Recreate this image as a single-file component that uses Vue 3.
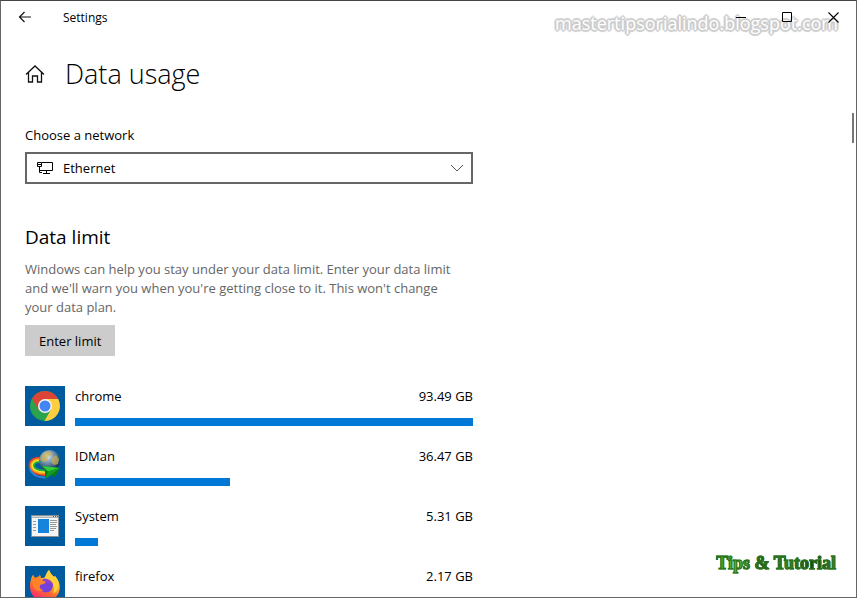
<template>
  <div class="window">
    <header class="titlebar">
      <button class="back" type="button" aria-label="Back">
        <svg width="14" height="12" viewBox="0 0 14 12" fill="none" stroke="#111" stroke-width="1.2">
          <path d="M13 6H1.5M6.5 1 1.5 6l5 5"/>
        </svg>
      </button>
      <span class="app-name">Settings</span>
      <div class="controls">
        <button type="button" aria-label="Minimize">
          <svg width="11" height="11" viewBox="0 0 11 11" stroke="#000"><path d="M0 5.5h10"/></svg>
        </button>
        <button type="button" aria-label="Maximize">
          <svg width="11" height="11" viewBox="0 0 11 11" fill="none" stroke="#000"><path d="M.5.5h9v9h-9z"/></svg>
        </button>
        <button type="button" aria-label="Close">
          <svg width="11" height="11" viewBox="0 0 11 11" stroke="#000" stroke-width="1.1"><path d="M.5.5l10 10M10.5.5l-10 10"/></svg>
        </button>
      </div>
    </header>
    <span class="watermark">mastertipsorialindo.blogspot.com</span>

    <div class="heading">
      <a class="home" href="#" aria-label="Home">
        <svg width="20" height="20" viewBox="0 0 20 20" fill="none" stroke="#111" stroke-width="1.3">
          <path d="M1 10.500 10 2l9 8.500M3.500 8.500v9.500h4v-6h5v6h4V8.500"/>
        </svg>
      </a>
      <h1>Data usage</h1>
    </div>

    <main class="content">
      <label class="field-label" for="network">Choose a network</label>
      <div class="select-box">
        <svg class="net-icon" width="17" height="14" viewBox="0 0 17 14" fill="none" stroke="#000">
          <path d="M5 1.500h10.500v8H2.500M9.500 10v2.500M6 12.500h7"/>
          <path d="M.5 1.500h4v4h-4zM2.500 5.500v6H5M1 3.500h3"/>
        </svg>
        <select id="network" v-model="network">
          <option>Ethernet</option>
          <option>Wi-Fi</option>
        </select>
        <svg class="chevron" width="14" height="8" viewBox="0 0 14 8" fill="none" stroke="#555">
          <path d="M1 1l6 6 6-6"/>
        </svg>
      </div>

      <h2>Data limit</h2>
      <p class="hint">
        Windows can help you stay under your data limit. Enter your data limit
        and we'll warn you when you're getting close to it. This won't change
        your data plan.
      </p>
      <button class="enter-limit" type="button">Enter limit</button>

      <ul class="usage">
        <li v-for="app in apps" :key="app.name" class="usage-row">
          <div class="tile">
            <svg v-if="app.name === 'chrome'" width="40" height="40" viewBox="0 0 40 40">
              <circle cx="20" cy="20" r="15" fill="#2ba24c"/>
              <path d="M7 12.500A15 15 0 0 1 33 12.500V13H20l-6.200 11z" fill="#db4437"/>
              <path d="M20 13h13.200A15 15 0 0 1 19.500 35L26 23.500z" fill="#ffcd40"/>
              <circle cx="20" cy="20" r="7" fill="#f4f4f4"/>
              <circle cx="20" cy="20" r="5.500" fill="#4285f4"/>
            </svg>
            <svg v-else-if="app.name === 'IDMan'" width="40" height="40" viewBox="0 0 40 40">
              <defs>
                <radialGradient id="globe" cx=".4" cy=".3" r=".75">
                  <stop offset="0" stop-color="#f2f6f5"/>
                  <stop offset=".3" stop-color="#8fa9c4"/>
                  <stop offset=".7" stop-color="#3d6080"/>
                  <stop offset="1" stop-color="#0c1d30"/>
                </radialGradient>
              </defs>
              <g fill="none" stroke-width="1.8">
                <path d="M17 12C10 10.500 4.500 14 4.500 19.500c0 6 7 9.500 16 9.500" stroke="#e8392a"/>
                <path d="M17 13.500C11 12 6 15 6 19.500c0 5 6 8 14 8" stroke="#ff9d14"/>
                <path d="M17 15c-5-1.500-9.500 1-9.500 4.500 0 4 5.500 6.500 12.500 6.500" stroke="#f4e82c"/>
                <path d="M16 16.500c-4-1-7 .5-7 3 0 3 4.500 5 11 5" stroke="#23a83f"/>
                <path d="M5 23c2 6 8 8.500 15.500 8.500" stroke="#2f8be0"/>
              </g>
              <circle cx="24.500" cy="14.500" r="10.500" fill="url(#globe)"/>
              <path d="M17 9c2-3 6-4 9-3l1 3-4 2-1 4-4 1-3-3zM27 12l4-3 3 4-1 5-4 1-3-3z" fill="#c9b04f" opacity=".7"/>
              <path d="M35 22 17 20l4 5-1 8 6-4 4 2z" fill="#0b7d18"/>
              <path d="M35 22 17 20l6 5.500z" fill="#2fd03a"/>
              <path d="M35 22 23 25.500 20 33l6-4z" fill="#139b24"/>
            </svg>
            <svg v-else-if="app.name === 'System'" width="40" height="40" viewBox="0 0 40 40">
              <path d="M6 9h28v22H6z" fill="#8c9195"/>
              <path d="M7 12h26v18H7z" fill="#f5f5f5"/>
              <path d="M7 10h26v1.500H7z" fill="#d3d6d8"/>
              <path d="M28 10.500h1M30 10.500h1M32 10.500h1" stroke="#555"/>
              <path d="M13 13h11v14H13z" fill="#1683dc"/>
              <path d="M8 15.500h3M8 18.500h3M8 21.500h3M8 24.500h3M25 14.500h7M25 16.500h7M25 18.500h6M25 20.500h7M25 22.500h6M25 24.500h4" stroke="#999"/>
            </svg>
            <svg v-else width="40" height="40" viewBox="0 0 40 40">
              <defs>
                <linearGradient id="flame" x1=".8" y1="0" x2=".3" y2="1">
                  <stop offset="0" stop-color="#fff44f"/>
                  <stop offset=".35" stop-color="#ffbd2f"/>
                  <stop offset=".65" stop-color="#ff6b2d"/>
                  <stop offset="1" stop-color="#f7227b"/>
                </linearGradient>
              </defs>
              <path d="M6 14c0-2 1-4 2-5l2 3c2-1 4-1 5-3l1 3c2 0 3 0 4-1 1-3 2-5 4-7 1 3 3 5 5 7l1-1c4 4 6 10 4 16-2 6-8 9-14 9C11 35 5 29 5 21c0-3 0-5 1-7z" fill="url(#flame)"/>
              <circle cx="21" cy="19.500" r="7" fill="#7541d9"/>
              <path d="M21 12.500a7 7 0 0 1 7 7c-2-3-5-4-9-4z" fill="#a03fc0"/>
              <path d="M8 9l2 3c2-1 4-1 5-3l1 4c2 2 4 2 5 3-1 2-4 2-6 3-1 3 1 5 4 5-4 2-9 1-11-4-1-4-1-8 0-11z" fill="#ff8226"/>
              <path d="M24 4c1 3 3 5 5 7l1-1c3 4 4 8 3 12-1 3-3 5-5 6 2-5 1-10-2-13-2-2-5-2-6-3 1-3 2-6 4-8z" fill="#ffcf39"/>
            </svg>
          </div>
          <div class="usage-info">
            <div class="usage-text">
              <span>{{ app.name }}</span>
              <span>{{ app.gb.toFixed(2) }} GB</span>
            </div>
            <div class="track">
              <div class="bar" :style="{ width: percent(app.gb) }"></div>
            </div>
          </div>
        </li>
      </ul>
    </main>

    <div class="scroll-thumb"></div>
    <span class="brand">Tips &amp; Tutorial</span>
  </div>
</template>

<script setup>
import { ref } from 'vue'

const network = ref('Ethernet')

const apps = [
  { name: 'chrome', gb: 93.49 },
  { name: 'IDMan', gb: 36.47 },
  { name: 'System', gb: 5.31 },
  { name: 'firefox', gb: 2.17 }
]

const max = Math.max(...apps.map(a => a.gb))

function percent(gb) {
  return (gb / max) * 100 + '%'
}
</script>

<style>
body {
  margin: 0;
  overflow: hidden;
}
</style>

<style scoped>
.window {
  position: relative;
  box-sizing: border-box;
  height: 100vh;
  overflow: hidden;
  border: 1px solid #666;
  border-top-color: #444;
  background: #fff;
  color: #000;
  font-family: 'Open Sans', 'Noto Sans', sans-serif;
  font-size: 13px;
  line-height: 20px;
}

button {
  border: 0;
  background: none;
  font: inherit;
  color: inherit;
}

svg {
  display: block;
}

.titlebar {
  position: relative;
  z-index: 1;
  display: flex;
  align-items: center;
  height: 32px;
}

.back {
  display: flex;
  justify-content: center;
  width: 48px;
  padding: 0;
}

.app-name {
  flex: 1;
  padding: 2px 0 0 14px;
  font-size: 12px;
}

.controls {
  display: flex;
}

.controls button {
  display: flex;
  align-items: center;
  justify-content: center;
  width: 46px;
  height: 32px;
  padding: 0;
}

.watermark {
  position: absolute;
  top: 8px;
  right: 18px;
  font-size: 18px;
  line-height: 28px;
  color: #fff;
  text-shadow: 1px 1px 1px #ccc, -1px -1px 1px #ccc, 1px -1px 1px #ccc, -1px 1px 1px #ccc,
    2px 0 1px #ccc, -2px 0 1px #ccc, 0 2px 1px #ccc, 0 -2px 1px #ccc;
  pointer-events: none;
}

.heading {
  display: flex;
  align-items: center;
  gap: 20px;
  height: 40px;
  padding: 21px 24px 0;
}

h1 {
  margin: 0;
  font-size: 27px;
  font-weight: 300;
  line-height: 40px;
}

.content {
  max-width: 448px;
  padding: 31px 24px 0;
}

.field-label {
  display: block;
}

.select-box {
  display: grid;
  grid-template-columns: 38px 1fr 32px;
  align-items: center;
  margin-top: 7px;
}

.select-box select {
  grid-area: 1 / 1 / 2 / 4;
  width: 100%;
  height: 32px;
  padding: 0 36px;
  border: 2px solid #666;
  border-radius: 0;
  background: #fff;
  color: #000;
  font: inherit;
  appearance: none;
}

.net-icon,
.chevron {
  z-index: 1;
  grid-row: 1;
  pointer-events: none;
}

.net-icon {
  grid-column: 1;
  margin-left: 12px;
}

.chevron {
  grid-column: 3;
  justify-self: center;
}

h2 {
  margin: 39px 0 0;
  font-size: 19px;
  font-weight: 400;
  line-height: 28px;
}

.hint {
  max-width: 436px;
  margin: 9px 0 0;
  color: #666;
  line-height: 19px;
}

.enter-limit {
  height: 31px;
  margin-top: 8px;
  padding: 0 14px;
  background: #ccc;
}

.usage {
  margin: 30px 0 0;
  padding: 0;
  list-style: none;
}

.usage-row {
  display: flex;
  gap: 10px;
  height: 40px;
  margin-bottom: 20px;
}

.tile {
  width: 40px;
  height: 40px;
  background: #005a9e;
}

.usage-info {
  flex: 1;
}

.usage-text {
  display: flex;
  justify-content: space-between;
}

.track {
  margin-top: 12px;
}

.bar {
  height: 8px;
  background: #0078d7;
}

.scroll-thumb {
  position: absolute;
  top: 112px;
  right: 2px;
  width: 2px;
  height: 30px;
  background: #777;
}

.brand {
  position: absolute;
  right: 20px;
  bottom: 20px;
  font-family: 'Liberation Serif', serif;
  font-size: 18px;
  font-weight: bold;
  line-height: 28px;
  color: transparent;
  background: linear-gradient(100deg, #3f9a1c, #55b830 20%, #1d5e1b 40%, #348a20 60%, #173f1c 80%, #3d8c2a);
  background-clip: text;
  -webkit-text-stroke: 1px #2c701d;
}
</style>
